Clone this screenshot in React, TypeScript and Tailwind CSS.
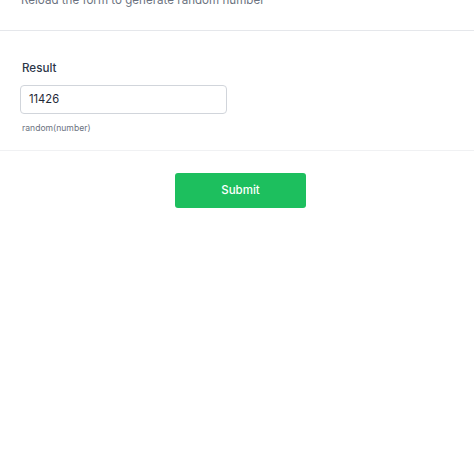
import React from "react";

export default function App() {
  return (
    <div className="w-[474px] h-[458px] bg-white overflow-hidden" style={{ fontFamily: "Inter, 'Noto Sans', sans-serif" }}>
      <div className="h-[31px] border-b border-[#e5e7eb] flex flex-col justify-end pb-[20px] pl-[21px]">
        <p className="text-[11.6px] leading-[20px] text-[#6b7280] whitespace-nowrap">Reload the form to generate random number</p>
      </div>
      <div className="pt-[29px] pb-[16px] px-[20px] border-b border-[#f0f1f3]">
        <label className="block text-[11.6px] leading-[16px] font-medium text-[#2d3748] pl-[2px]">Result</label>
        <div className="mt-[9px] w-[207px] h-[29px] border border-[#d1d5db] rounded-[4px] flex items-center px-[8px] text-[11.2px] text-[#1f2937]">
          11426
        </div>
        <p className="mt-[8px] pl-[2px] text-[8.6px] leading-[12px] text-[#6b7280]">random(number)</p>
      </div>
      <div className="pt-[22px] pl-[175px]">
        <button className="w-[131px] h-[35px] rounded-[3px] bg-[#1dbf5e] text-white text-[11.5px] font-medium">Submit</button>
      </div>
    </div>
  );
}
